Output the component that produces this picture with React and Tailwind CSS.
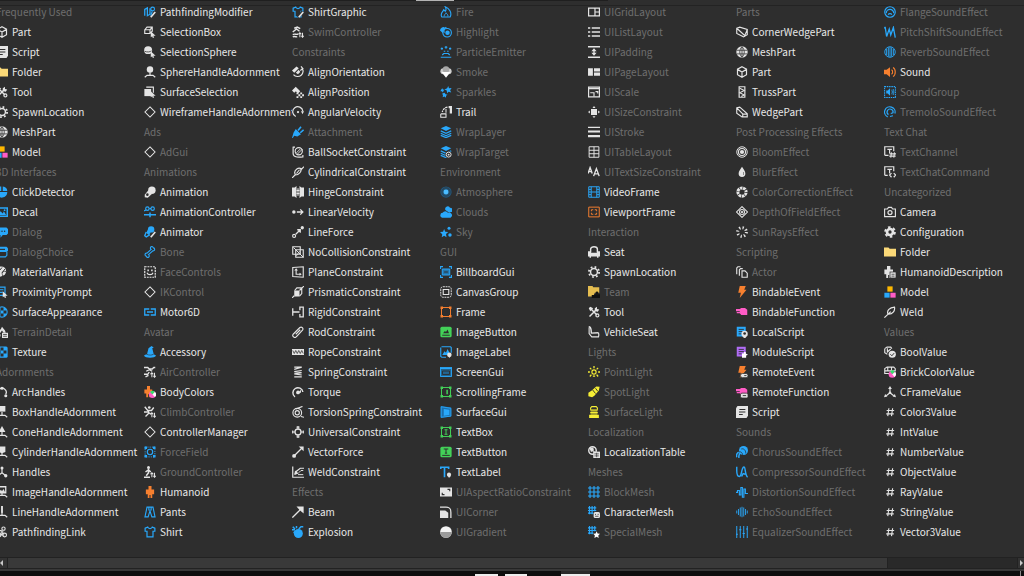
import React from 'react';

const W = '#e4e4e4';
const B = '#29a8fb';
const O = '#f7802f';
const G = '#43d158';
const P = '#ff5cc6';
const Y = '#f6ee35';
const V = '#b06cf5';
const BG = '#2e2e2e';

// small drawing helpers, everything sits on a 16x16 grid
const F = ({ d, c = W }) => <path d={d} fill={c} />;
const S = ({ d, c = W, w = 1.5, dash }) => (
  <path d={d} fill="none" stroke={c} strokeWidth={w} strokeDasharray={dash} />
);
const Dot = ({ x = 8, y = 8, r, c = W }) => <circle cx={x} cy={y} r={r} fill={c} />;
const Ring = ({ x = 8, y = 8, r, c = W, w = 1.5, dash }) => (
  <circle cx={x} cy={y} r={r} fill="none" stroke={c} strokeWidth={w} strokeDasharray={dash} />
);

const Pointer = () => <F d="M9 7l6.5 6h-3l1 2.5h-2L11 13.5 9 15z" />;
const Axes = () => <S d="M8 8v4M1 15l3-2.5h8L15 15" w={1.6} />;
const Arrows = () => <S d="M10.5 15V9M8.5 11l2-2 2 2M14 9v6M12.5 13l1.5 2 1.5-2" w={1.4} />;
const Pencil = () => <S d="M9 15l6-7" w={2.2} />;
const Shirt = () => <S d="M5 1.5L1.5 3v4H4v7.500h8V7h2.5V3L11 1.5C10 4 6 4 5 1.500z" c={B} w={1.6} />;
const Corners = ({ c }) => (
  <F d="M.7.7h3.300v3.300H.7zM12 .7h3.300v3.300H12zM.7 12h3.300v3.300H.7zM12 12h3.300v3.300H12z" c={c} />
);
const FrameBox = ({ c }) => (
  <>
    <S d="M2 2h12v12H2z" c={c} w={1.3} />
    <Corners c={c} />
  </>
);
const Bolt = () => <F d="M5 0h8l-2 5h3L5 16l1.500-7H3z" c={O} />;
const Fist = () => <F d="M0 4h5l2-1.500h5L15 5v7H7L5 9.500H1V8h4V7H0z" c={P} />;
const Sheet = ({ c }) => (
  <>
    <F d="M1 1h12v13H1z" c={c} />
    <S d="M3.500 4.500h7M3.500 7.500h7M3.500 10.500h4" c={BG} w={1.2} />
  </>
);
const MeshGrid = ({ small }) => (
  <S
    d={small ? 'M0 2.500h11M0 6h11M0 9.500h7M2 0v11M5.500 0v11M9 0v7' : 'M0 2.700h16M0 8h16M0 13.300h16M2.700 0v16M8 0v16M13.300 0v16'}
    c={B}
    w={1.5}
  />
);
const Body = ({ c }) => <F d="M6 0h4v4.500h3.500V11H11v5H8.700v-4H7.300v4H5v-5H2.500V4.500H6z" c={c} />;
const Layers = () => (
  <>
    <F d="M8 0l7 3-7 3.500L1 3z" c={B} />
    <S d="M1 6.500l7 3.200 7-3.200M1 9.700l7 3.200 7-3.200M1 12.500l7 3 7-3" c={B} w={1.6} />
  </>
);

const icons = {
  Part: <S d="M8 1l6 3.200v7.400L8 15l-6-3.400V4.200zM2 4.500L8 8l6-3.500M8 8v7" w={1.6} />,
  Script: (
    <>
      <F d="M2 0h14v13l-2 3H0V3z" />
      <S d="M4.500 4.700h8M4 8h8.500M4 11.300h5" c={BG} w={1.5} />
    </>
  ),
  Folder: <F d="M0 2h6l1.500 1.500H16V14H0z" c="#fbd978" />,
  Tool: (
    <>
      <S d="M2 14l8-8M3 3l9 9" w={2} />
      <F d="M9 3l3-2v3l3 .5-2 3-4-1zM1 3l2-2 4 2-4 4z" />
      <Ring x={12.5} y={12.5} r={2} w={1.6} />
    </>
  ),
  SpawnLocation: (
    <>
      <Ring r={4.6} w={2} />
      <Ring r={6.8} w={2.4} dash="2.340 3" />
    </>
  ),
  MeshPart: (
    <>
      <Dot r={7.6} />
      <S d="M1 5.700h14M1 10.500h14M8 1v14M8 1C4 5 4 11 8 15M8 1c4 4 4 10 0 14" c={BG} w={1} />
    </>
  ),
  Model: (
    <>
      <F d="M4.500 .5h7V7.500h-7z" c="#ffb800" />
      <F d="M.5 9h7v6.500h-7z" c={B} />
      <F d="M8.500 9h7v6.500h-7z" c={P} />
    </>
  ),
  ClickDetector: <F d="M1 8h14a7 7 0 0 1-14 1zM1 6.500a7 6 0 0 1 6-6v6zM9 .5a7 6 0 0 1 6 6H9z" c={B} />,
  Decal: (
    <>
      <S d="M1 2.500h14v11H1z" c={B} w={2} />
      <F d="M3 12l3-5 3 3 1.500-3 3 5z" c={B} />
      <Dot x={11.5} y={5.5} r={1.2} c={B} />
    </>
  ),
  Dialog: (
    <>
      <F d="M2 2h12l2 2v6l-2 2H9l-3 3.500V12H2l-2-2V4z" c={B} />
      <Dot x={4.5} y={7} r={1} c={BG} />
      <Dot x={8} y={7} r={1} c={BG} />
      <Dot x={11.5} y={7} r={1} c={BG} />
    </>
  ),
  DialogChoice: (
    <>
      <F d="M2 1h12l2 2v3.500L14 8H2L0 6.500V3z" c={B} />
      <S d="M4 4.500h8" c={BG} />
      <S d="M1.500 8v4l2 2.500h9l2-2V8" c={B} />
    </>
  ),
  MaterialVariant: (
    <>
      <Dot x={7} y={7} r={6.5} />
      <S d="M3 8l5-6M8 9l4-5" c={BG} w={1.3} />
      <Ring x={11.5} y={10.5} r={3.5} c={BG} w={1} />
      <Dot x={5} y={12} r={2.5} />
    </>
  ),
  ProximityPrompt: (
    <>
      <S d="M2 1.500h10v11H2z" c={B} w={1.6} />
      <S d="M4 5h6M4 8.500h5" c={B} />
      <Pointer />
    </>
  ),
  SurfaceAppearance: (
    <>
      <Dot r={7.6} c={B} />
      <F d="M6 2h4v4H6zM6 10h4v4H6zM2 6h4v4H2zM10 6h4v4h-4z" c={BG} />
    </>
  ),
  TerrainDetail: (
    <>
      <F d="M0 9l4-6 2 2 2-4 4 5 1 3h-3L8 6 5 10H0z" />
      <F d="M8 9h8v7H8zM1 11h5v3H1z" />
      <S d="M9.500 11.300h5M9.500 13.700h5" c={BG} w={1} />
    </>
  ),
  Texture: (
    <>
      <rect x="0.5" y="0.5" width="15" height="15" rx="2" fill={B} />
      <F d="M6 2h4v4H6zM2 6h4v4H2zM10 6h4v4h-4zM6 10h4v4H6z" c={BG} />
    </>
  ),
  ArcHandles: (
    <>
      <S d="M4 12a5.500 5.500 0 1 1 9-1" w={1.7} />
      <Dot y={3} r={2} />
      <Dot x={3} y={13} r={2} />
      <Dot x={13} y={13} r={2} />
    </>
  ),
  BoxHandle: (
    <>
      <F d="M3.500 0h9v7.500h-9z" />
      <Axes />
    </>
  ),
  ConeHandle: (
    <>
      <F d="M8 0l4.500 8h-9z" />
      <Axes />
    </>
  ),
  CylinderHandle: (
    <>
      <F d="M3.500 .5h9V8L8 9.500 3.500 8z" />
      <Axes />
    </>
  ),
  Handles: (
    <>
      <S d="M8 3v6L3 13M8 9l5 4" w={1.6} />
      <Dot y={2.5} r={2} />
      <Dot x={3} y={13} r={2} />
      <Dot x={13} y={13} r={2.2} />
    </>
  ),
  ImageHandle: (
    <>
      <S d="M3 1h10v8H3z" w={1.7} />
      <F d="M4 8l2.500-3L8 7l2-3 2 4z" />
      <Axes />
    </>
  ),
  LineHandle: (
    <>
      <S d="M8 0v9" w={2.5} />
      <Axes />
    </>
  ),
  PathfindingLink: (
    <>
      <Ring x={10} y={3.5} r={2.2} />
      <Ring x={4} y={12} r={2.5} />
      <Ring x={11.5} y={12} r={2.5} />
      <S d="M3 6h4v4M9 6v4l-3 2h5" w={1.4} />
    </>
  ),
  PathfindingModifier: (
    <>
      <S d="M1 13V4.500l3.500-2V13L8 11V3" c={B} w={1.7} />
      <Ring x={11.5} y={4} r={2.5} c={B} />
      <S d="M11 7l-2 6" c={B} />
      <Pencil />
    </>
  ),
  SelectionBox: (
    <>
      <S d="M1 5l3-3.500h7V7L8 10H1zM1 5h7v5M8 5l3-3" />
      <Pointer />
    </>
  ),
  SelectionSphere: (
    <>
      <Dot x={5.5} y={5.5} r={5.3} />
      <S d="M1 7c3 1.500 7 1 9-.5" c={BG} w={1} />
      <Pointer />
    </>
  ),
  SphereHandle: (
    <>
      <Dot y={4.5} r={4.3} />
      <Axes />
    </>
  ),
  SurfaceSelection: (
    <>
      <F d="M.5 4h9v9.500h-9z" />
      <S d="M3 1.500h9.500V9" />
      <Pointer />
    </>
  ),
  Diamond: <S d="M8 1.300L14.700 8 8 14.700 1.300 8z" w={1.4} />,
  Animation: (
    <>
      <Dot x={10.5} y={5.5} r={5} />
      <F d="M5.500 6L1 11.500V15l4 .5 5.500-5z" />
      <Dot x={4.5} y={11.5} r={1.7} c={BG} />
    </>
  ),
  AnimationController: (
    <>
      <Ring x={4.5} y={3.5} r={2.3} c={B} />
      <Ring x={11.5} y={3.5} r={2.3} c={B} />
      <S d="M0 6.500l3-1.500M7 3.500h2.500" c={B} />
      <S d="M0 11.500h16M8 8.500v6.500" c={B} w={2} />
    </>
  ),
  Animator: (
    <>
      <Dot x={9.5} y={4.5} r={4.3} c={B} />
      <S d="M3 8l-2 5 2 1.500 5-3" c={B} w={1.8} />
      <F d="M5 5L3 9l3 3 3-3z" c={B} />
      <Pencil />
    </>
  ),
  Bone: (
    <S d="M9.500 4.500a2 2 0 1 1 3-2 2 2 0 1 1-.7 4L6 11.500a2 2 0 1 1-3 2 2 2 0 1 1 1-4z" c={B} w={1.5} />
  ),
  FaceControls: (
    <>
      <S d="M1 1h14v14H1z" dash="2.500 1.170" w={1.6} />
      <F d="M4.500 4.500h2v2.500h-2zM9.500 4.500h2v2.500h-2z" />
      <S d="M4 9c1 3.500 7 3.500 8 0" w={1.6} />
    </>
  ),
  Motor6D: <S d="M7 4H1v8h6M9 4h6v8H9M4 8h8" c={B} w={1.7} />,
  Accessory: (
    <>
      <F d="M4 11l2-8 4-3 3 2-2 1 2 8z" c={B} />
      <F d="M0 12.500c4-2.500 12-2.500 16 0-1 4-15 4-16 0z" c={B} />
      <S d="M3.500 11c3 1.500 7 1.500 9 0" c={BG} w={0.8} />
    </>
  ),
  AirController: (
    <>
      <S d="M0 2h5l2 2h4l2-2h2M3 7l4-2 4 2M0 11h5l2-3M2 14.500l4-2" w={1.8} />
      <Arrows />
    </>
  ),
  BodyColors: (
    <>
      <F d="M4 0h4v4.500h3V9H9v6H7v-4H5.500v4H3v-5H.5V4.500H4z" c={O} />
      <Dot x={11.3} y={11.3} r={4.6} c={P} />
      <F d="M11.300 11.300L8 8a4.600 4.600 0 0 1 6.600 0z" c="#37e06b" />
      <F d="M11.300 11.300L14.600 8a4.600 4.600 0 0 1 0 6.600z" c="#ffffff" />
    </>
  ),
  ClimbController: (
    <>
      <Dot x={7} y={2} r={1.8} />
      <S d="M1 1l4 5h5l3-4M6 6v4l-4 4M0 8h5M7 9l2 2" w={1.8} />
      <Arrows />
    </>
  ),
  ForceField: (
    <>
      <Corners c={B} />
      <S d="M1.500 1.500h13v13h-13z" c={B} dash="1.500 1.500" w={1.2} />
      <Ring r={3.6} c={B} />
    </>
  ),
  GroundController: (
    <>
      <Dot x={6} y={2} r={2} />
      <S d="M6 4v6M2 8l4-3 3 3M6 9l-3 4M0 15h8" w={2} />
      <Arrows />
    </>
  ),
  Humanoid: <Body c={O} />,
  Pants: <S d="M4 1.500h8l2.700 13H10.500L8 6.500l-2.500 8H1.300zM6.500 2v4M9.500 2v4" c={B} w={1.5} />,
  Shirt: <Shirt />,
  ShirtGraphic: (
    <>
      <Shirt />
      <S d="M8 15l6.500-7.500" c={BG} w={4} />
      <Pencil />
    </>
  ),
  SwimController: (
    <>
      <S d="M3 3l4-1.500 4 2M1 8l5-4 4 3M1 11.500c3-2 5 1 7-1M1 14.500c2-1 4 0 6 0" w={1.9} />
      <Arrows />
    </>
  ),
  AlignOrientation: (
    <>
      <F d="M0 6l6-5.500L9 3 3 9zM5 9l4-4 2 3-3 3z" />
      <S d="M13 2a7 7 0 1 1-11 9.500M12 .5l2.500 3L11 6" w={1.6} />
    </>
  ),
  AlignPosition: (
    <>
      <F d="M0 6l5-5 3 3-5 5zM5 7l3-3 3 3-3 3z" />
      <F d="M6 8.500h2.500V11H6zM11 8.500h2.500V11H11zM8.500 11H11v2.500H8.500zM13.500 11H16v2.500h-2.500zM11 13.500h2.500V16H11zM6 13.500h2.500V16H6z" />
    </>
  ),
  AngularVelocity: (
    <>
      <S d="M5 14A6.800 6.800 0 1 1 14.500 7" w={1.6} />
      <F d="M12 7h4l-2 4z" />
      <Dot r={1.5} />
    </>
  ),
  Attachment: (
    <>
      <F d="M0 16l2-7 3-5 7 7-5 3-4-1-2 3z" c={B} />
      <S d="M8 6l4-5M11 9l4.500-4" c={B} w={2.2} />
    </>
  ),
  BallSocket: (
    <>
      <S d="M1.500 1v9c0 6 9 5 13 4.500V12M1 1.500h3" w={1.6} />
      <Ring x={9} y={7} r={4.8} />
      <S d="M6 9l5-5M7 11l7-7" w={1.2} />
    </>
  ),
  Cylindrical: (
    <>
      <S d="M3.500 9c0-4 5-7.500 8.500-5.500 1 4-3 8.500-7.500 8.500zM0 16l5-5M11 6l5-5" w={1.6} />
      <S d="M6 10l4-5" w={1.5} />
    </>
  ),
  Hinge: (
    <>
      <F d="M0 2h3.500L6 0v16l-2.500-2H0zM10 0l2.500 2H16v12h-3.500L10 16z" />
      <S d="M8 3v10M6 6h4M6 10h4" w={1.5} />
    </>
  ),
  LinearVelocity: (
    <>
      <Dot x={2.5} r={2.3} />
      <S d="M6.500 8H14M11 4.500L14.500 8 11 11.500" w={1.7} />
    </>
  ),
  LineForce: (
    <>
      <Ring x={2.8} y={13.2} r={2} />
      <Dot x={13.7} y={2.3} r={2.2} />
      <S d="M5 11l6-6M7 5h4v4" w={1.7} />
    </>
  ),
  NoCollision: (
    <>
      <S d="M1 1h10v10H1zM5 5h10v10H5z" />
      <S d="M2 2l13 13M6 13l4-6" w={1.3} />
    </>
  ),
  Plane: (
    <>
      <S d="M1 2l14-1v14L1 14z" />
      <S d="M5.500 5v6H12" w={1.5} />
      <F d="M5.500 3L8 6H3zM13 11l-3-2v4z" />
    </>
  ),
  Prismatic: (
    <>
      <F d="M3 6h7v8H3z" />
      <S d="M3.500 6l3-3.500H13V10l-3 3.500M10 6l6-6M0 16l3-3" w={1.5} />
    </>
  ),
  Rigid: <S d="M1 3v10M1 8h9M10.500 5.500V1.500H15v13h-4.500v-4" w={1.7} />,
  Rod: <S d="M1.500 11l9-9a2.500 2.500 0 0 1 3.500 3.500L6 14a2.700 2.700 0 0 1-4.500-3zM5 11l6-6" w={1.5} />,
  Rope: (
    <>
      <F d="M0 4h16v8H0z" />
      <S d="M1 6l2 4 2-4 2 4 2-4 2 4 2-4 2 4" c={BG} w={1} />
    </>
  ),
  Spring: (
    <S
      d="M3 1.500h10M3 4.500L13 6M3 7.500L13 9M3 10.500l10 1.500M3 14.500h10M13 1.500L3 4.500M13 6L3 7.500M13 9L3 10.500"
      w={1.4}
    />
  ),
  Torque: (
    <>
      <S d="M4 14.500A6.700 6.700 0 1 1 14.500 8" w={1.9} />
      <Dot y={8.500} r={2.5} />
      <F d="M8 9l4-4v4z" />
    </>
  ),
  TorsionSpring: (
    <>
      <Ring x={7} y={9} r={5.8} />
      <Ring x={7} y={9} r={2.8} />
      <S d="M5 4l9-3.500M12 14l4 1" />
    </>
  ),
  Universal: (
    <>
      <Ring r={4} w={1.7} />
      <S d="M8 0v4M8 12v4M0 8h4M12 8h4M6 1.500h4M6 14.500h4M1 6v4M15 6v4" w={1.5} />
    </>
  ),
  VectorForce: (
    <>
      <Dot x={2.8} y={13.2} r={2.6} />
      <S d="M4 12l9-9" w={1.7} />
      <F d="M9 .5h6.500V7z" />
    </>
  ),
  Weld: (
    <>
      <S d="M1 .5V15h15M4 11l2-4 5-4h5" w={1.6} />
      <F d="M3 12l1-6 5 4z" />
      <S d="M9 9l3-3h3M8 11.500h7" w={1.3} />
    </>
  ),
  Beam: (
    <>
      <S d="M.5 15.500L12 4" w={1.7} />
      <F d="M6 .5h9.500V10L12 7 9.500 4.500z" />
    </>
  ),
  Explosion: (
    <>
      <Dot x={8.5} y={10} r={6} c={B} />
      <S d="M1 1l3 3M0 5h4M6 0v3M9 4l3-3h3M4.500 7L2 9" c={B} w={2} />
    </>
  ),
  Fire: (
    <>
      <S d="M2.500 14.700C-.5 10 4 8 5 5l2 2c2-2 1-4 0-6C12 3 16.500 9 13.500 14.700z" c={B} w={1.5} />
      <S d="M5.500 14c0-3 2-3 2.500-5 1 2 3 2 2.500 5" c={B} w={1.3} />
    </>
  ),
  Highlight: (
    <>
      <Ring x={9.5} y={9} r={5.7} c={B} />
      <Dot x={10} y={9} r={3} c={B} />
      <F d="M8 1a5 5 0 0 0-1 9 6 6 0 0 1 2-8z" c={B} />
      <F d="M0 6a4.500 4.500 0 0 1 6.500-4L4 9.500z" c={B} />
    </>
  ),
  ParticleEmitter: (
    <S
      d="M1 15h14M3 12l2-2h6l2 2M2.500 2v3M1 3.500h3M8 0v3.500M6.200 1.700h3.600M13.500 2v3M12 3.500h3M5 7h2M9.500 7h2"
      c={B}
      w={1.5}
    />
  ),
  Smoke: (
    <>
      <Dot x={4.5} y={7} r={4} c="#cfcfcf" />
      <Dot x={11.5} y={7} r={4} c="#cfcfcf" />
      <Dot y={4.7} r={4.3} c="#a8a8a8" />
      <F d="M2 8h12l-6 7.500z" c="#ffffff" />
    </>
  ),
  Sparkles: (
    <>
      <F d="M11 0l1 3 3.500-.5-2 3L15 8.500l-3.500-1-2 2L9 6 6 4.500 9.500 3z" c={B} />
      <F d="M3 3l1 1.500L6 5 4.500 6.500 4 8.500 2.500 7 .5 7l1-2zM6 9l1.500 2 2.500.5L8 13v2.500L6 14l-2.500 1L4 12.500 3 10z" c={B} />
    </>
  ),
  Trail: (
    <>
      <F d="M11.500 0H16v10h-3V3h-1.500z" />
      <S d="M10 1.500C6 2 4 5 3 8" w={1.6} dash="3 1" />
      <S d="M1 10.500V15h7v-4.500H1M8 4v5" w={1.4} />
    </>
  ),
  WrapLayer: <Layers />,
  WrapTarget: (
    <>
      <Layers />
      <Dot x={11.5} y={11.5} r={4.5} c={BG} />
      <Ring x={11.5} y={11.5} r={3.3} w={1.3} />
      <Dot x={11.5} y={11.5} r={1.3} />
    </>
  ),
  Atmosphere: (
    <>
      <Dot r={7.5} c="#22567a" />
      <Ring r={5.5} c={BG} w={0.8} />
      <Dot r={3.3} c="#4bbcff" />
    </>
  ),
  Clouds: (
    <>
      <F d="M7 5a3.500 3.500 0 0 1 6.500-2.500A3 3 0 0 1 15.500 8H11L8 6z" c={B} />
      <F d="M.5 12a3 3 0 0 1 3-3 4 4 0 0 1 7 0A3 3 0 0 1 14 15.500H3a3 3 0 0 1-2.500-3.500z" c={B} />
    </>
  ),
  Sky: (
    <>
      <F d="M5.500 4L7 7.500l4 .5-3 2.700.7 4.300-3.200-2-3.200 2 .7-4L0 8l4-.5z" c={B} />
      <Dot x={12} y={3} r={2} c={B} />
      <Dot x={13.3} y={12} r={2.3} c={B} />
    </>
  ),
  BillboardGui: (
    <>
      <S d="M.8 4V.8H4M12 .8h3.200V4M.8 12v3.200H4M12 15.200h3.200V12" c={B} />
      <F d="M3 4h10v8H3z" c="#2376ad" />
      <S d="M3 4h10v8H3z" c={B} w={1.3} />
      <S d="M5.500 8h5" c={BG} w={1.3} />
    </>
  ),
  CanvasGroup: (
    <>
      <rect x="1" y="1" width="14" height="14" rx="3" fill="none" stroke={W} strokeWidth="1.3" strokeDasharray="2.5 1" />
      <S d="M4.300 4.700h7.400v6.600H4.300z" w={1.5} />
    </>
  ),
  Frame: <FrameBox c={O} />,
  ImageButton: (
    <>
      <rect x="0.5" y="1" width="15" height="14" rx="2" fill={G} />
      <F d="M4 9.500l2.500-3L8 8l2-3.500 2 5z" c={BG} />
      <S d="M3 12.300h10" c={BG} w={1.3} />
    </>
  ),
  ImageLabel: (
    <>
      <S d="M2 1h12l1 1v7M1 2v12l1.500 1H8" c={B} />
      <F d="M3 12l3-5 2 2 2-5 2.500 4.500-3 3.500z" c={B} />
      <Dot x={12.5} y={11.5} r={3} />
      <F d="M10 12l2.500 4 2-3z" />
    </>
  ),
  ScreenGui: (
    <>
      <F d="M0 1.500h16v13H0z" c="#23648f" />
      <F d="M0 1.500h16V4H0z" c={B} />
      <S d="M3.300 6.700h9.400v4.600H3.300z" c={BG} w={1.2} />
      <S d="M.6 2v12h14.800V2" c={B} w={1.2} />
    </>
  ),
  ScrollingFrame: (
    <>
      <FrameBox c={G} />
      <S d="M9.500 5v6" c={G} w={2} />
    </>
  ),
  SurfaceGui: (
    <>
      <F d="M1 0l14 2v12L1 16z" c="#1b6fae" />
      <F d="M5 4l7.500 1v7L5 13z" c={B} />
      <S d="M1.500 1l13 2v10.500l-13 1.500z" c={B} w={1.2} />
    </>
  ),
  TextBox: (
    <>
      <FrameBox c={G} />
      <S d="M8 5v6M6 5h4M6 11h4" c={G} w={1.3} />
    </>
  ),
  TextButton: (
    <>
      <rect x="0.5" y="1" width="15" height="14" rx="2" fill={G} />
      <S d="M5 4h6M8 4v5.500M6.500 9.500h3M3 12.500h10" c={BG} w={1.3} />
    </>
  ),
  TextLabel: (
    <>
      <S d="M0 1.700h12M6 2v13M1 .6V4M11.500 .6V4" c={B} w={2.2} />
      <Dot x={12} y={11.5} r={2.8} />
      <F d="M10 12l2 4 2.500-3z" />
    </>
  ),
  UIAspectRatio: (
    <>
      <F d="M0 2h16v12H0z" />
      <S d="M10 4.500h3V7M3 9v2.500h3" c={BG} />
    </>
  ),
  UICorner: (
    <>
      <F d="M0 6h7l4 3v7H0z" />
      <S d="M0 1.500h8c6 0 6.500 3 6.500 7V16" w={1.7} />
    </>
  ),
  UIGradient: (
    <>
      <Dot r={7.8} c="#f4f4f4" />
      <F d="M.2 8h15.600a7.800 7.800 0 0 1-15.600 0z" c="#9b9b9b" />
    </>
  ),
  UIGridLayout: <S d="M.8 2.800h14.400v10.400H.8zM9.300 3v10M9.300 8H15" w={1.6} />,
  UIListLayout: <S d="M0 2.700h3M5 2.700h11M0 8h3M5 8h11M0 13.300h3M5 13.300h11" w={2} />,
  UIPadding: (
    <>
      <S d="M0 1h16M0 15h16M8 5v6" w={1.7} />
      <F d="M8 3l3.500 4h-7zM8 13L4.500 9h7z" />
    </>
  ),
  UIPageLayout: <F d="M0 3h6.500v10H0zM8 3h8v4.300H8zM8 8.700h8V13H8z" />,
  UIScale: (
    <>
      <S d="M.8 1.500h14.400v13H.8zM1 3.500h14" w={1.6} />
      <S d="M3 9h5v5M10 7.500h3V10" w={1.5} />
    </>
  ),
  UISizeConstraint: (
    <F d="M4 4h8v8H4zM6 2.500L8 0l2 2.500zM6 13.500L8 16l2-2.500zM2.500 6L0 8l2.500 2zM13.500 6L16 8l-2.500 2z" />
  ),
  UIStroke: <F d="M0 1h16v1.500H0zM0 6h16v2.500H0zM0 12h16v3H0z" />,
  UITableLayout: <S d="M1.500 1h13v14h-13zM1.500 5.700h13M1.500 10.300h13M8 1v14" w={1.3} />,
  UITextSize: <S d="M0 10l2.800-8 2.800 8M1 7.500h4M7.500 13.500l3.700-10 3.700 10M9 10.500h4.500" w={1.8} />,
  VideoFrame: (
    <S d="M1 1h14v14H1zM4.300 1v14M11.700 1v14M4.300 8h7.400M1 4.500h3M1 8h3M1 11.500h3M12 4.500h3M12 8h3M12 11.500h3" c={B} w={1.3} />
  ),
  ViewportFrame: (
    <S d="M1 1.500h14v13H1zM4.500 7V5H7M9 5h2.500v2M4.500 9v2H7M9 11h2.500V9" c={O} w={1.3} />
  ),
  Seat: (
    <>
      <S d="M3.500 8V4c0-4 9-4 9 0v4" w={1.9} />
      <F d="M0 7h3.500l1 2h7l1-2H16v7h-2v1.500h-2V14H4v1.500H2V14H0z" />
    </>
  ),
  Team: (
    <>
      <F d="M0 0h6l1 1.500h8V9H9l-2 5H0z" c="#e5bd50" />
      <Dot x={12} y={9} r={1.800} c="#111111" />
      <F d="M5 16v-4h3l1-1h7v5z" c="#111111" />
    </>
  ),
  VehicleSeat: (
    <>
      <S d="M1 1c4 0 3 6 3.500 8.500L14 9" w={1.9} />
      <S d="M1.500 2v8L5 14.500h9c1-2 0-5.500 0-5.500" w={1.5} />
    </>
  ),
  PointLight: (
    <>
      <Ring r={2.8} c={Y} />
      <S
        d="M8 0v3M0 8h2.500M13.500 8H16M2.500 2.500l2 2M13.500 2.500l-2 2M2.500 14l2-2.500M13.500 14l-2-2.500M6.500 13.500h3"
        c={Y}
        w={1.7}
      />
    </>
  ),
  SpotLight: (
    <>
      <F d="M5 6l6-5.500L15.500 1l-1 5-6 7-3 2-5-1.500L.5 9z" c={Y} />
      <S d="M6 5l4 5M10 3l3 4" c={BG} w={1.2} />
    </>
  ),
  SurfaceLight: (
    <>
      <F d="M3.500 5h9v7h-9z" c="#8d8a2c" />
      <S d="M3.500 5V2.500l1.500-1.700h6l1.500 1.700V5" c={Y} />
      <F d="M3 4.500h10V6H3zM3 8h10v1.500H3zM1.500 11.500h13V16h-13z" c={Y} />
    </>
  ),
  LocalizationTable: (
    <>
      <Ring x={6} y={6} r={5} w={1.9} />
      <F d="M2 3l5-1 1 4-4 2zM6 7h3v3z" />
      <F d="M7 7.500h9V16H7z" />
      <S d="M8.500 10.500h6M8.500 13.200h6M11.500 9v6" c={BG} w={0.9} />
    </>
  ),
  BlockMesh: <MeshGrid />,
  CharacterMesh: (
    <>
      <MeshGrid small />
      <rect x="7.5" y="8" width="8.5" height="8" rx="2" fill={W} />
      <S d="M10 10.500V12M13.500 10.500V12M9.500 13.700h4.500" c={BG} w={1} />
    </>
  ),
  SpecialMesh: (
    <>
      <MeshGrid small />
      <F d="M11.500 7l1.300 3 3.200.4-2.300 2.100.6 3.500-2.800-1.800L8.500 16l.7-3.500L7 10.400l3.200-.4z" c="#ffffff" />
    </>
  ),
  CornerWedge: <S d="M1 3l4-1.500 10 3v7l-5 3L1 10zM1 3l11 10M15 4.500l-4 10" w={1.5} />,
  Truss: (
    <>
      <S d="M4.200 1h7.600v14H4.200z" w={1.6} />
      <S d="M5 3l6 3-6 3 6 3-4 2" w={1.4} />
    </>
  ),
  WedgePart: <S d="M1 2.500L5 1.500l10 9V14.500H8L1 9.500zM1 2.500l8 8 6 .5M9 10v4.500" w={1.5} />,
  Bloom: (
    <>
      <Ring r={7} w={1.3} />
      <Ring r={4.7} w={1.5} />
      <Dot r={2.8} />
    </>
  ),
  Blur: (
    <>
      <F d="M8 1c2 3 4.500 6 4.500 9a4.500 4.500 0 0 1-9 0C3.500 7 6 4 8 1z" />
      <S d="M10 8v4" c="#8a8a8a" w={1.3} />
    </>
  ),
  ColorCorrection: (
    <>
      <Ring r={5.5} w={4} />
      <Ring r={5.5} w={4.4} c={BG} dash="0.900 3.420" />
    </>
  ),
  DepthOfField: (
    <>
      <S d="M8 .8L15.200 8 8 15.200.8 8z" w={1.4} />
      <Ring r={3.3} w={1.5} />
      <Dot r={1.5} />
    </>
  ),
  SunRays: <Ring r={5.8} w={4} dash="1.700 2.855" />,
  Actor: <S d="M1 11V2.500L2.500 1H6M4.500 13V5L6 3.500h3M8 6.500h4L15 9.500v5.500H8z" w={1.5} />,
  BindableEvent: <Bolt />,
  BindableFunction: <Fist />,
  LocalScript: (
    <>
      <Sheet c={B} />
      <Dot x={11.5} y={10.5} r={4.2} />
      <F d="M10 13h3v3h-3z" />
      <Dot x={11.5} y={10} r={1.8} c={BG} />
    </>
  ),
  ModuleScript: (
    <>
      <Sheet c={V} />
      <F d="M8 10h2.500V8H13v2l3 1.500-2.500 1V15.500H8z" c="#ffffff" />
    </>
  ),
  RemoteEvent: (
    <>
      <Bolt />
      <rect x="6" y="10" width="10" height="5.5" rx="2.5" fill={W} stroke={BG} />
      <S d="M11 12.800h3" c={BG} w={1.2} />
    </>
  ),
  RemoteFunction: (
    <>
      <Fist />
      <rect x="6" y="9.5" width="10" height="6.5" rx="2" fill={W} stroke={BG} />
      <S d="M9 12.800h4.500" c={BG} w={1.2} />
    </>
  ),
  Chorus: (
    <>
      <Dot x={10} y={6} r={6} c={B} />
      <S d="M1 15c-1-4 1-7 4-6M4 16c-1-5 2-8 6-7" c={B} w={2} />
      <S d="M3.500 8c3-1 5.500 1 5.500 5M7 4c3-1 6 1 6 6" c={BG} w={1} />
    </>
  ),
  Compressor: (
    <S d="M1 1v5c0 5 1 8 3.500 8S7 8 8.500 4s3-3 3.500 0 1 9 3.500 11M7.500 14l2-4 3 1" c={B} w={1.9} />
  ),
  Distortion: <S d="M0 8.500h2V6h2.500v6H6.500V2h2v13h2V4h2v6H16" c={B} w={1.5} />,
  Echo: <S d="M1 6v4M3.300 4v8M5.700 2v12M8 1v14M10.300 2v12M12.700 4v8M15 6v4" c={B} w={1.2} />,
  Equalizer: <S d="M1 0v16M5.700 0v16M10.300 0v16M15 0v16M-.5 11h3M4.200 5h3M8.800 10h3M13.500 4h3" c={B} w={1.3} />,
  Flange: (
    <>
      <Ring r={7} c={B} w={1.6} />
      <S d="M3 9.500a5 5 0 0 1 10 0M5.500 11.500a3 3 0 0 1 5 0" c={B} w={1.6} />
    </>
  ),
  PitchShift: <S d="M1.500 1l2 13L7 4l2 8 3.500-10L15 15.500M0 2.500h2" c={B} w={1.8} />,
  Reverb: (
    <>
      <Ring r={7} c={B} w={1.2} />
      <S d="M3.500 4v8M5.800 2v12M8 1v14M10.200 2v12M12.500 4v8" c={B} w={1.2} />
    </>
  ),
  Sound: (
    <>
      <F d="M0 5h3.500L8 1.500v13L3.500 11H0z" c={O} />
      <S d="M10 5c2 1 2 5 0 6M12 2c4 2 4 10 0 12" c={O} w={1.5} />
    </>
  ),
  SoundGroup: (
    <>
      <S d="M.8 .8h14.400v14.400H.8z" c={B} w={1.4} dash="2 1" />
      <F d="M3 6h2l3-3v10l-3-3H3z" c={B} />
      <S d="M10 5c1.500 1.500 1.500 4.500 0 6M12 4c1.500 2 1.500 6 0 8" c={B} w={1.2} />
    </>
  ),
  Tremolo: (
    <>
      <S d="M5 14.500A7 7 0 1 1 14.500 10" c={B} w={1.6} />
      <S d="M6 11.500A4 4 0 1 1 12 9l-3 1M8 14l4-1" c={B} w={1.6} />
    </>
  ),
  TextChannel: (
    <>
      <S d="M6 12.500H2L1 12V1h12v6M4.500 4.500h6M7.500 4.500V10" w={1.6} />
      <S d="M10 8.500l-1 7M14 8.500l-1 7M7.500 10.500H16M7 13.500h8.500" w={1.4} />
    </>
  ),
  TextChatCommand: (
    <>
      <S d="M5 12.500H2L1 12V1h12v6M4.500 4.500h6M7.500 4.500V10" w={1.6} />
      <S d="M10 9.500L7.500 12l2.500 3M13 9.500l2.500 2.500-2.500 3" w={1.6} />
    </>
  ),
  Camera: (
    <>
      <S d="M.8 4h3.700L6 1.800h4L11.500 4h3.700v10.200H.8z" w={1.5} />
      <Ring y={8.8} r={2.7} w={1.6} />
    </>
  ),
  Configuration: (
    <>
      <Ring r={4} w={3.6} />
      <Ring r={6.5} w={2.6} dash="3.400 3.400" />
    </>
  ),
  HumanoidDescription: (
    <>
      <F d="M4 0h4.500v4.500h3.500V11H9v5H7v-4H5.500v4H3v-5H.5V4.500H4z" />
      <rect x="8" y="8" width="8" height="8" fill={W} stroke={BG} />
      <S d="M10 11h4M10 13.500h4" c={BG} w={1} />
    </>
  ),
  WeldTorch: <S d="M5 10c-1-4 2-8 9-8.500C15 7 11 11 6.500 11zM.5 15.500L9 7.500" w={1.6} />,
  BoolValue: (
    <>
      <S d="M1 3.500l3-2h5l1.500 2M1 3.500V9l3.500 2M4.500 3v5L9 4" />
      <Dot x={11} y={11} r={4.8} />
      <S d="M8.500 11l2 2 3-3.500" c={BG} w={1.3} />
    </>
  ),
  BrickColorValue: (
    <>
      <S d="M1 3.500l3-2h9l2 2v3H1zM1 6.500V10h6M5 2v5M10 2v4" w={1.5} />
      <Dot x={11} y={11} r={4.8} c={P} />
      <F d="M11 11L8 7.300a4.800 4.800 0 0 1 6.500 0z" c="#37e06b" />
      <F d="M11 11l4-3a4.800 4.800 0 0 1-1 6.500z" c="#ffffff" />
    </>
  ),
  CFrameValue: (
    <>
      <S d="M8 3v6L3 13M8 9l5 4" w={1.6} />
      <F d="M8 0l2.500 4h-5zM0 15l1.500-4.500L4.500 14zM16 15l-1.500-4.500L11.500 14z" />
      <Dot y={9} r={1.700} />
    </>
  ),
  Value: <S d="M6.500 3L5 13.500M11.500 3L10 13.500M3.500 6h10M3 10.500h10" w={1.5} />,
};

// `icon` falls back to the label, `off` marks classes that can't be inserted here
const on = (label, icon = label) => ({ label, icon });
const off = (label, icon = label) => ({ label, icon, disabled: true });

const groups = [
  {
    title: 'Frequently Used',
    items: [on('Part'), on('Script'), on('Folder'), on('Tool'), on('SpawnLocation'), on('MeshPart'), on('Model')],
  },
  {
    title: '3D Interfaces',
    items: [
      on('ClickDetector'), on('Decal'), off('Dialog'), off('DialogChoice'), on('MaterialVariant'),
      on('ProximityPrompt'), on('SurfaceAppearance'), off('TerrainDetail'), on('Texture'),
    ],
  },
  {
    title: 'Adornments',
    items: [
      on('ArcHandles'), on('BoxHandleAdornment', 'BoxHandle'), on('ConeHandleAdornment', 'ConeHandle'),
      on('CylinderHandleAdornment', 'CylinderHandle'), on('Handles'), on('ImageHandleAdornment', 'ImageHandle'),
      on('LineHandleAdornment', 'LineHandle'), on('PathfindingLink'), on('PathfindingModifier'), on('SelectionBox'),
      on('SelectionSphere'), on('SphereHandleAdornment', 'SphereHandle'), on('SurfaceSelection'),
      on('WireframeHandleAdornment', 'Diamond'),
    ],
  },
  { title: 'Ads', items: [off('AdGui', 'Diamond')] },
  {
    title: 'Animations',
    items: [
      on('Animation'), on('AnimationController'), on('Animator'), off('Bone'), off('FaceControls'),
      off('IKControl', 'Diamond'), on('Motor6D'),
    ],
  },
  {
    title: 'Avatar',
    items: [
      on('Accessory'), off('AirController'), on('BodyColors'), off('ClimbController'), on('ControllerManager', 'Diamond'),
      off('ForceField'), off('GroundController'), on('Humanoid'), on('Pants'), on('Shirt'), on('ShirtGraphic'),
      off('SwimController'),
    ],
  },
  {
    title: 'Constraints',
    items: [
      on('AlignOrientation'), on('AlignPosition'), on('AngularVelocity'), off('Attachment'),
      on('BallSocketConstraint', 'BallSocket'), on('CylindricalConstraint', 'Cylindrical'),
      on('HingeConstraint', 'Hinge'), on('LinearVelocity'), on('LineForce'),
      on('NoCollisionConstraint', 'NoCollision'), on('PlaneConstraint', 'Plane'),
      on('PrismaticConstraint', 'Prismatic'), on('RigidConstraint', 'Rigid'), on('RodConstraint', 'Rod'),
      on('RopeConstraint', 'Rope'), on('SpringConstraint', 'Spring'), on('Torque'),
      on('TorsionSpringConstraint', 'TorsionSpring'), on('UniversalConstraint', 'Universal'), on('VectorForce'),
      on('WeldConstraint', 'Weld'),
    ],
  },
  {
    title: 'Effects',
    items: [
      on('Beam'), on('Explosion'), off('Fire'), off('Highlight'), off('ParticleEmitter'), off('Smoke'),
      off('Sparkles'), on('Trail'), off('WrapLayer'), off('WrapTarget'),
    ],
  },
  { title: 'Environment', items: [off('Atmosphere'), off('Clouds'), off('Sky')] },
  {
    title: 'GUI',
    items: [
      on('BillboardGui'), on('CanvasGroup'), on('Frame'), on('ImageButton'), on('ImageLabel'), on('ScreenGui'),
      on('ScrollingFrame'), on('SurfaceGui'), on('TextBox'), on('TextButton'), on('TextLabel'),
      off('UIAspectRatioConstraint', 'UIAspectRatio'), off('UICorner'), off('UIGradient'), off('UIGridLayout'),
      off('UIListLayout'), off('UIPadding'), off('UIPageLayout'), off('UIScale'), off('UISizeConstraint'),
      off('UIStroke'), off('UITableLayout'), off('UITextSizeConstraint', 'UITextSize'), on('VideoFrame'),
      on('ViewportFrame'),
    ],
  },
  { title: 'Interaction', items: [on('Seat'), on('SpawnLocation'), off('Team'), on('Tool'), on('VehicleSeat')] },
  { title: 'Lights', items: [off('PointLight'), off('SpotLight'), off('SurfaceLight')] },
  { title: 'Localization', items: [on('LocalizationTable')] },
  { title: 'Meshes', items: [off('BlockMesh'), on('CharacterMesh'), off('SpecialMesh')] },
  {
    title: 'Parts',
    items: [on('CornerWedgePart', 'CornerWedge'), on('MeshPart'), on('Part'), on('TrussPart', 'Truss'), on('WedgePart')],
  },
  {
    title: 'Post Processing Effects',
    items: [
      off('BloomEffect', 'Bloom'), off('BlurEffect', 'Blur'), off('ColorCorrectionEffect', 'ColorCorrection'),
      off('DepthOfFieldEffect', 'DepthOfField'), off('SunRaysEffect', 'SunRays'),
    ],
  },
  {
    title: 'Scripting',
    items: [
      off('Actor'), on('BindableEvent'), on('BindableFunction'), on('LocalScript'), on('ModuleScript'),
      on('RemoteEvent'), on('RemoteFunction'), on('Script'),
    ],
  },
  {
    title: 'Sounds',
    items: [
      off('ChorusSoundEffect', 'Chorus'), off('CompressorSoundEffect', 'Compressor'),
      off('DistortionSoundEffect', 'Distortion'), off('EchoSoundEffect', 'Echo'),
      off('EqualizerSoundEffect', 'Equalizer'), off('FlangeSoundEffect', 'Flange'),
      off('PitchShiftSoundEffect', 'PitchShift'), off('ReverbSoundEffect', 'Reverb'), on('Sound'),
      off('SoundGroup'), off('TremoloSoundEffect', 'Tremolo'),
    ],
  },
  { title: 'Text Chat', items: [off('TextChannel'), off('TextChatCommand')] },
  {
    title: 'Uncategorized',
    items: [
      on('Camera'), on('Configuration'), on('Folder'), on('HumanoidDescription'), on('Model'), on('Weld', 'WeldTorch'),
    ],
  },
  {
    title: 'Values',
    items: [
      on('BoolValue'), on('BrickColorValue'), on('CFrameValue'), on('Color3Value', 'Value'), on('IntValue', 'Value'),
      on('NumberValue', 'Value'), on('ObjectValue', 'Value'), on('RayValue', 'Value'), on('StringValue', 'Value'),
      on('Vector3Value', 'Value'),
    ],
  },
];

const ClassButton = ({ item }) => (
  <button
    type="button"
    disabled={item.disabled}
    className="flex h-5 w-full min-w-0 items-center gap-1 overflow-hidden text-left text-[#e8e8e8] disabled:text-[#6e6e6e]"
  >
    <svg viewBox="0 0 16 16" className="h-3 w-3 shrink-0" aria-hidden="true">
      {icons[item.icon]}
    </svg>
    <span className="whitespace-nowrap">{item.label}</span>
  </button>
);

const ScrollBar = () => (
  <div className="flex h-3 items-stretch border-y border-[#222222] bg-[#292929]">
    <button type="button" aria-label="Scroll left" className="flex w-2 items-center border-r border-[#222222] bg-[#333333]">
      <svg viewBox="0 0 6 8" className="h-2 w-1.5" aria-hidden="true">
        <path d="M3 1v6L0 4z" fill="#c8c8c8" />
      </svg>
    </button>
    <div className="flex-[880] border-r border-[#222222] bg-[#393939]" />
    <div className="flex-[129]" />
    <button type="button" aria-label="Scroll right" className="flex w-[7px] items-center justify-end border-l border-[#222222] bg-[#333333]">
      <svg viewBox="0 0 6 8" className="h-2 w-1.5" aria-hidden="true">
        <path d="M2 1v6l3-3z" fill="#c8c8c8" />
      </svg>
    </button>
  </div>
);

const App = () => (
  <div className="flex h-screen flex-col overflow-hidden bg-[#2e2e2e] font-['Noto_Sans_CJK_JP','Noto_Sans',sans-serif] text-[10px] leading-5">
    <div className="flex h-[6px] shrink-0 border-b border-[#232323]">
      <div className="h-px flex-[416] bg-[#1f1f1f]" />
      <div className="h-px flex-[38] bg-[#b4b4b4]" />
      <div className="h-px flex-[154] bg-[#1f1f1f]" />
      <div className="flex-[416]" />
    </div>

    {/* Class list, fills column by column */}
    <div className="-mt-1 -mr-2 -ml-1 grid flex-1 auto-cols-fr grid-flow-col grid-rows-[repeat(27,20px)]">
      {groups.map((group) => (
        <React.Fragment key={group.title}>
          <h3 className="whitespace-nowrap text-[#6e6e6e]">{group.title}</h3>
          {group.items.map((item) => (
            <ClassButton key={item.label} item={item} />
          ))}
        </React.Fragment>
      ))}
    </div>

    <ScrollBar />

    {/* Edge of the window underneath */}
    <div className="flex h-[7px] shrink-0 items-end border-t-2 border-[#383838] bg-[#0e0e0e]">
      <div className="flex-[475]" />
      <div className="h-0.5 flex-[23] bg-[#ededed]" />
      <div className="flex-[7]" />
      <div className="h-0.5 flex-[22] bg-[#ededed]" />
      <div className="flex-[34]" />
      <div className="h-full flex-[29] border-b-2 border-[#ededed] bg-[#2a2a2a]" />
      <div className="flex-[430]" />
      <div className="h-full w-px bg-[#8a8a8a]" />
      <div className="flex-[3]" />
    </div>
  </div>
);

export default App;
